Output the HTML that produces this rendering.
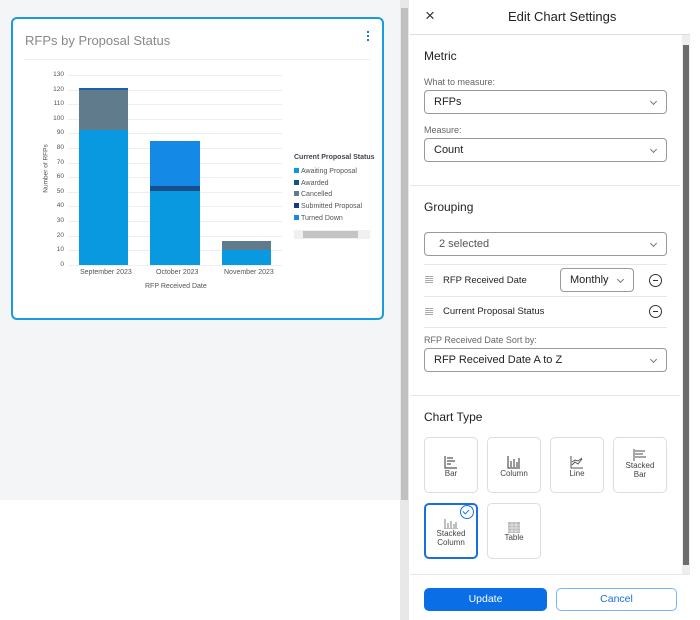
<!DOCTYPE html>
<html><head><meta charset="utf-8"><style>
*{box-sizing:border-box;margin:0;padding:0}
body{width:700px;height:620px;position:relative;background:#fff;font-family:"Liberation Sans",sans-serif;color:#222;overflow:hidden}
.a{position:absolute}
.lbl{font-size:9px;color:#666}
.sel{position:absolute;left:424px;width:243px;height:24px;border:1px solid #999;border-radius:4px;font-size:11px;padding:5px 9px;color:#222}
.sel:after{content:"";position:absolute;right:10px;top:8px;width:4px;height:4px;border-right:1px solid #777;border-bottom:1px solid #777;transform:rotate(45deg)}
.h{font-size:12px;color:#222}
.hr{position:absolute;height:1px;background:#e6e6e6}
.ct{position:absolute;width:54px;height:56px;border:1px solid #ddd;border-radius:5px;font-size:8px;color:#444;text-align:center}
.ct svg{display:block;margin:0 auto}
.grid{position:absolute;left:68px;width:214px;height:1px;background:#eee}
.yt{position:absolute;left:44px;width:20px;text-align:right;font-size:6.5px;color:#555}
.leg{position:absolute;left:294px;font-size:7px;color:#555}
.leg i{display:inline-block;width:5px;height:5px;margin-right:2px;vertical-align:-0px}
.grip{position:absolute;left:425px;width:8px;height:8px;background:repeating-linear-gradient(#aaa 0 1px,#fff 1px 2px)}
.minus{position:absolute;left:649px;width:13px;height:13px;border:1.3px solid #333;border-radius:50%}
.minus:after{content:"";position:absolute;left:3px;top:5px;width:5px;height:1.3px;background:#333}
</style></head><body>
<div class="a" style="left:0;top:0;width:400px;height:500px;background:#f4f5f7"></div>
<div class="a" style="left:400px;top:0;width:9px;height:620px;background:#e8e8e8"></div>
<div class="a" style="left:401px;top:8px;width:7px;height:492px;background:#c0c0c0"></div>

<!-- card -->
<div class="a" style="left:11px;top:17px;width:373px;height:303px;background:#fff;border:2px solid #1a9ae0;border-radius:6px"></div>
<div class="a" style="left:25px;top:33px;font-size:13px;color:#888">RFPs by Proposal Status</div>
<div class="a" style="left:367px;top:31px;width:2px;height:2px;background:#1a7ad0;box-shadow:0 4px 0 #1a7ad0,0 8px 0 #1a7ad0"></div>
<div class="a" style="left:24px;top:59px;width:346px;height:1px;background:#eee"></div>
<div class="grid" style="top:75px"></div><div class="grid" style="top:90px"></div><div class="grid" style="top:104px"></div><div class="grid" style="top:119px"></div><div class="grid" style="top:133px"></div><div class="grid" style="top:148px"></div><div class="grid" style="top:163px"></div><div class="grid" style="top:177px"></div><div class="grid" style="top:192px"></div><div class="grid" style="top:206px"></div><div class="grid" style="top:221px"></div><div class="grid" style="top:236px"></div><div class="grid" style="top:250px"></div><div class="grid" style="top:265px"></div>
<div class="yt" style="top:71px">130</div><div class="yt" style="top:86px">120</div><div class="yt" style="top:100px">110</div><div class="yt" style="top:115px">100</div><div class="yt" style="top:129px">90</div><div class="yt" style="top:144px">80</div><div class="yt" style="top:159px">70</div><div class="yt" style="top:173px">60</div><div class="yt" style="top:188px">50</div><div class="yt" style="top:202px">40</div><div class="yt" style="top:217px">30</div><div class="yt" style="top:232px">20</div><div class="yt" style="top:246px">10</div><div class="yt" style="top:261px">0</div>
<div class="a" style="left:11px;top:165px;transform:rotate(-90deg);font-size:6.5px;color:#555;width:70px;text-align:center">Number of RFPs</div>
<!-- bars -->
<div class="a" style="left:79px;top:88px;width:49px;height:2px;background:#1a5fb0"></div>
<div class="a" style="left:79px;top:90px;width:49px;height:40px;background:#5f7b8c"></div>
<div class="a" style="left:79px;top:130px;width:49px;height:135px;background:#0899e0"></div>
<div class="a" style="left:150px;top:141px;width:50px;height:45px;background:#1589e6"></div>
<div class="a" style="left:150px;top:186px;width:50px;height:5px;background:#174f8c"></div>
<div class="a" style="left:150px;top:191px;width:50px;height:74px;background:#0899e0"></div>
<div class="a" style="left:222px;top:241px;width:49px;height:9px;background:#5f7b8c"></div>
<div class="a" style="left:222px;top:250px;width:49px;height:15px;background:#0899e0"></div>
<div class="a" style="left:80px;top:269px;font-size:7px;color:#555">September 2023</div>
<div class="a" style="left:156px;top:269px;font-size:7px;color:#555">October 2023</div>
<div class="a" style="left:224px;top:269px;font-size:7px;color:#555">November 2023</div>
<div class="a" style="left:145px;top:283px;font-size:7px;color:#555">RFP Received Date</div>
<div class="leg" style="top:154px;font-weight:bold;color:#445">Current Proposal Status</div>
<div class="leg" style="top:168px"><i style="background:#0899e0"></i>Awaiting Proposal</div>
<div class="leg" style="top:180px"><i style="background:#174f8c"></i>Awarded</div>
<div class="leg" style="top:191px"><i style="background:#5f7b8c"></i>Cancelled</div>
<div class="leg" style="top:203px"><i style="background:#12388c"></i>Submitted Proposal</div>
<div class="leg" style="top:215px"><i style="background:#1589e6"></i>Turned Down</div>
<div class="a" style="left:294px;top:230px;width:76px;height:9px;background:#f0f0f0"></div>
<div class="a" style="left:303px;top:231px;width:55px;height:7px;background:#c4c4c4"></div>

<!-- right panel -->
<div class="a" style="left:410px;top:0;width:290px;height:620px;background:#fff"></div>
<div class="a" style="left:425px;top:6px;font-size:17px;color:#333">×</div>
<div class="a" style="left:508px;top:9px;font-size:13px;color:#222">Edit Chart Settings</div>
<div class="hr" style="left:410px;top:34px;width:280px;background:#ddd"></div>
<div class="a" style="left:682px;top:35px;width:8px;height:540px;background:#eee"></div>
<div class="a" style="left:683px;top:45px;width:6px;height:520px;background:#6c6c6c"></div>

<div class="a h" style="left:424px;top:49px">Metric</div>
<div class="a lbl" style="left:424px;top:77px">What to measure:</div>
<div class="sel" style="top:90px">RFPs</div>
<div class="a lbl" style="left:424px;top:125px">Measure:</div>
<div class="sel" style="top:138px">Count</div>
<div class="hr" style="left:410px;top:185px;width:270px"></div>
<div class="a h" style="left:424px;top:200px">Grouping</div>
<div class="sel" style="top:232px;color:#555;padding-left:14px">2 selected</div>
<div class="hr" style="left:424px;top:264px;width:243px"></div>
<div class="grip" style="top:276px"></div>
<div class="a" style="left:443px;top:275px;font-size:9.5px">RFP Received Date</div>
<div class="sel" style="left:560px;width:74px;top:268px;height:24px">Monthly</div>
<div class="minus" style="top:274px"></div>
<div class="hr" style="left:424px;top:296px;width:243px"></div>
<div class="grip" style="top:308px"></div>
<div class="a" style="left:443px;top:306px;font-size:9.5px">Current Proposal Status</div>
<div class="minus" style="top:305px"></div>
<div class="hr" style="left:424px;top:327px;width:243px"></div>
<div class="a lbl" style="left:424px;top:335px">RFP Received Date Sort by:</div>
<div class="sel" style="top:348px">RFP Received Date A to Z</div>
<div class="hr" style="left:410px;top:395px;width:270px"></div>
<div class="a h" style="left:424px;top:410px">Chart Type</div>

<div class="ct" style="left:424px;top:437px"><svg width="14" height="14" viewBox="0 0 14 14" style="margin-top:17px"><path d="M1 1v12h12M3 3h6M3 6h8M3 9h4" stroke="#555" fill="none" stroke-width="1.2"/></svg>Bar</div>
<div class="ct" style="left:487px;top:437px"><svg width="14" height="14" viewBox="0 0 14 14" style="margin-top:17px"><path d="M1 1v12h12M4 12V6M7 12V4M10 12V7M12 12V3" stroke="#555" fill="none" stroke-width="1.2"/></svg>Column</div>
<div class="ct" style="left:550px;top:437px"><svg width="14" height="14" viewBox="0 0 14 14" style="margin-top:17px"><path d="M1 1v12h12M2 10l3-3 3 2 4-5M2 7l3-2 3 1 4-3" stroke="#555" fill="none" stroke-width="1"/></svg>Line</div>
<div class="ct" style="left:613px;top:437px"><svg width="14" height="12" viewBox="0 0 14 12" style="margin-top:11px"><path d="M1 0v12M2 2h10M2 5h8M2 8h11" stroke="#888" fill="none" stroke-width="1.5"/></svg>Stacked<br>Bar</div>
<div class="ct" style="left:424px;top:503px;border:2px solid #1a6fe0"><svg width="14" height="10" viewBox="0 0 14 10" style="margin-top:14px"><path d="M1 0v10h13M4 9V4M7 9V2M10 9V5M12 9V3" stroke="#aaa" fill="none" stroke-width="1.5"/></svg>Stacked<br>Column</div>
<div class="a" style="left:460px;top:505px;width:14px;height:14px;border:1.5px solid #1a6fe0;border-radius:50%;background:#fff"></div>
<div class="a" style="left:464px;top:508px;width:4px;height:6px;border-right:1.5px solid #1a6fe0;border-bottom:1.5px solid #1a6fe0;transform:rotate(45deg)"></div>
<div class="ct" style="left:487px;top:503px"><svg width="12" height="11" viewBox="0 0 12 11" style="margin-top:18px"><rect x="0" y="0" width="12" height="11" fill="#bbb"/><path d="M0 3h12M0 6h12M0 9h12M4 0v11M8 0v11" stroke="#eee" stroke-width="0.7"/></svg>Table</div>

<div class="hr" style="left:410px;top:574px;width:280px"></div>
<div class="a" style="left:424px;top:588px;width:123px;height:23px;background:#0a6ee6;border-radius:5px;color:#fff;font-size:10.5px;text-align:center;line-height:23px">Update</div>
<div class="a" style="left:556px;top:588px;width:121px;height:23px;border:1px solid #7ab6f0;border-radius:5px;color:#1a6fe0;font-size:10.5px;text-align:center;line-height:21px">Cancel</div>
</body></html>
